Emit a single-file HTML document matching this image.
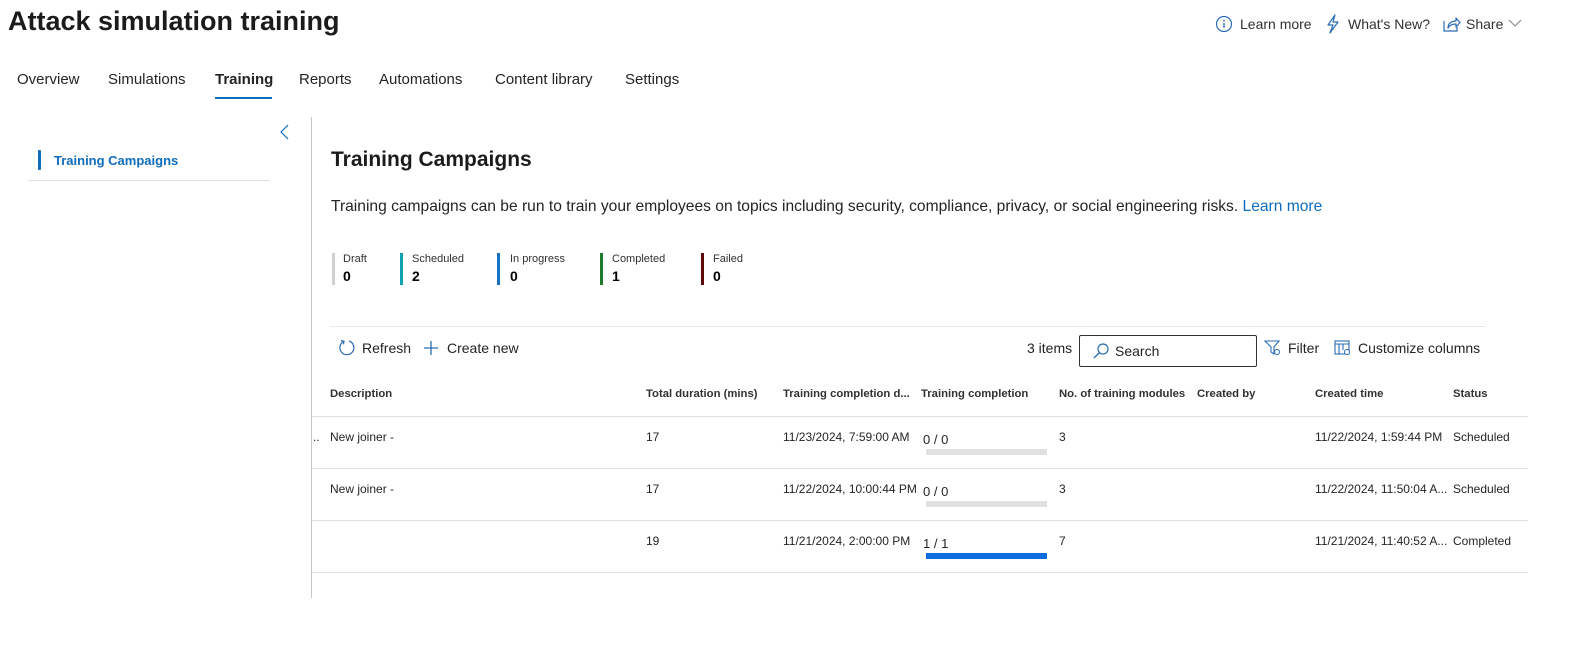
<!DOCTYPE html>
<html><head><meta charset="utf-8"><style>
*{margin:0;padding:0;box-sizing:border-box}
body{width:1591px;height:648px;background:#fff;font-family:"Liberation Sans",sans-serif;color:#242424;position:relative;overflow:hidden}
.a{position:absolute;white-space:nowrap}
.t12{font-size:12px}
.hd{font-size:11.3px;font-weight:bold;color:#323130}
.line{position:absolute;height:1px;background:#e1dfdd}
.bar{position:absolute;width:3px;height:32px}
.st{position:absolute;font-size:11px;color:#323130}
.st b{display:block;font-size:14px;color:#000;margin-top:3px}
</style></head><body>
<div class="a" style="left:8px;top:6px;font-size:27px;font-weight:bold;color:#1b1b1b">Attack simulation training</div>

<svg class="a" style="left:1215px;top:15px" width="18" height="18" viewBox="0 0 18 18"><circle cx="9" cy="9" r="7.5" fill="none" stroke="#2a6cb5" stroke-width="1.2"/><line x1="9" y1="8" x2="9" y2="13" stroke="#2a6cb5" stroke-width="1.3"/><circle cx="9" cy="5.5" r="0.9" fill="#2a6cb5"/></svg>
<div class="a" style="left:1240px;top:16px;font-size:14px;color:#323130">Learn more</div>
<svg class="a" style="left:1325px;top:14px" width="16" height="20" viewBox="0 0 16 20"><path d="M10 1 L3 11 H8 L5 19 L13 8 H8 Z" fill="none" stroke="#2a6cb5" stroke-width="1.2" stroke-linejoin="round"/></svg>
<div class="a" style="left:1348px;top:16px;font-size:14px;color:#323130">What's New?</div>
<svg class="a" style="left:1443px;top:15px" width="18" height="18" viewBox="0 0 18 18"><path d="M1 6 V16 H14 V12" fill="none" stroke="#2a6cb5" stroke-width="1.2"/><path d="M5 13 C5 8 9 6 13 6 V3 L17 7.5 L13 12 V9 C9 9 7 10 5 13Z" fill="none" stroke="#2a6cb5" stroke-width="1.2" stroke-linejoin="round"/></svg>
<div class="a" style="left:1466px;top:16px;font-size:14px;color:#323130">Share</div>
<svg class="a" style="left:1508px;top:18px" width="14" height="10" viewBox="0 0 14 10"><path d="M1 2 L7 8 L13 2" fill="none" stroke="#8a8886" stroke-width="1.1"/></svg>

<div class="a" style="left:17px;top:71px;font-size:15px">Overview</div>
<div class="a" style="left:108px;top:71px;font-size:15px">Simulations</div>
<div class="a" style="left:215px;top:71px;font-size:15px;font-weight:bold">Training</div>
<div class="a" style="left:215px;top:97px;width:57px;height:2px;background:#0f6cbd"></div>
<div class="a" style="left:299px;top:71px;font-size:15px">Reports</div>
<div class="a" style="left:379px;top:71px;font-size:15px">Automations</div>
<div class="a" style="left:495px;top:71px;font-size:15px">Content library</div>
<div class="a" style="left:625px;top:71px;font-size:15px">Settings</div>

<svg class="a" style="left:279px;top:124px" width="12" height="16" viewBox="0 0 12 16"><path d="M9 1 L2 8 L9 15" fill="none" stroke="#0f6cbd" stroke-width="1.2"/></svg>
<div class="a" style="left:311px;top:117px;width:1px;height:481px;background:#c8c6c4"></div>
<div class="a" style="left:38px;top:150px;width:3px;height:20px;background:#0f6cbd;border-radius:1px"></div>
<div class="a" style="left:54px;top:153px;font-size:13px;font-weight:bold;color:#0f6cbd">Training Campaigns</div>
<div class="line" style="left:28px;top:180px;width:241px"></div>

<div class="a" style="left:331px;top:148px;font-size:21px;font-weight:bold;color:#1b1b1b">Training Campaigns</div>
<div class="a" style="left:331px;top:198px;font-size:15.6px;color:#242424">Training campaigns can be run to train your employees on topics including security, compliance, privacy, or social engineering risks. <span style="color:#0f6cbd">Learn more</span></div>

<div class="bar" style="left:332px;top:253px;background:#d1d1d1"></div><div class="st" style="left:343px;top:253px">Draft<b>0</b></div>
<div class="bar" style="left:400px;top:253px;background:#0fa3b1"></div><div class="st" style="left:412px;top:253px">Scheduled<b>2</b></div>
<div class="bar" style="left:497px;top:253px;background:#1872c4"></div><div class="st" style="left:510px;top:253px">In progress<b>0</b></div>
<div class="bar" style="left:600px;top:253px;background:#1e7a2b"></div><div class="st" style="left:612px;top:253px">Completed<b>1</b></div>
<div class="bar" style="left:701px;top:253px;background:#5c0a0a"></div><div class="st" style="left:713px;top:253px">Failed<b>0</b></div>

<div class="line" style="left:330px;top:326px;width:1155px;background:#e8e8e8"></div>
<svg class="a" style="left:338px;top:339px" width="18" height="18" viewBox="0 0 18 18"><path d="M6 2.3 A7 7 0 1 0 11 2" fill="none" stroke="#2a6cb5" stroke-width="1.2"/><path d="M3 1.5 L6 2.3 L5.5 5.3" fill="none" stroke="#2a6cb5" stroke-width="1.2"/></svg>
<div class="a" style="left:362px;top:340px;font-size:14px">Refresh</div>
<svg class="a" style="left:423px;top:340px" width="16" height="16" viewBox="0 0 16 16"><path d="M8 1 V15 M1 8 H15" stroke="#2a6cb5" stroke-width="1.3"/></svg>
<div class="a" style="left:447px;top:340px;font-size:14px">Create new</div>
<div class="a" style="left:1027px;top:340px;font-size:14px">3 items</div>
<div class="a" style="left:1079px;top:335px;width:178px;height:32px;border:1px solid #323130;border-radius:2px"></div>
<svg class="a" style="left:1092px;top:342px" width="18" height="18" viewBox="0 0 18 18"><circle cx="11" cy="7" r="5" fill="none" stroke="#2a6cb5" stroke-width="1.2"/><path d="M7.5 10.5 L2 16" stroke="#2a6cb5" stroke-width="1.3"/></svg>
<div class="a" style="left:1115px;top:343px;font-size:14px">Search</div>
<svg class="a" style="left:1264px;top:339px" width="18" height="18" viewBox="0 0 18 18"><path d="M1 2 H15 L10 8 V15 L7 13 V8 Z" fill="none" stroke="#2a6cb5" stroke-width="1.1"/><circle cx="13" cy="13" r="2.5" fill="none" stroke="#2a6cb5" stroke-width="1"/></svg>
<div class="a" style="left:1288px;top:340px;font-size:14px">Filter</div>
<svg class="a" style="left:1334px;top:339px" width="18" height="18" viewBox="0 0 18 18"><rect x="1" y="2" width="14" height="13" fill="none" stroke="#2a6cb5" stroke-width="1.1"/><path d="M1 5 H15 M5 5 V15 M9 5 V11" stroke="#2a6cb5" stroke-width="1.1"/><circle cx="13" cy="13" r="2.5" fill="#fff" stroke="#2a6cb5" stroke-width="1"/></svg>
<div class="a" style="left:1358px;top:340px;font-size:14px">Customize columns</div>

<div class="a hd" style="left:330px;top:388px">Description</div>
<div class="a hd" style="left:646px;top:388px">Total duration (mins)</div>
<div class="a hd" style="left:783px;top:388px">Training completion d...</div>
<div class="a hd" style="left:921px;top:388px">Training completion</div>
<div class="a hd" style="left:1059px;top:388px">No. of training modules</div>
<div class="a hd" style="left:1197px;top:388px">Created by</div>
<div class="a hd" style="left:1315px;top:388px">Created time</div>
<div class="a hd" style="left:1453px;top:388px">Status</div>
<div class="line" style="left:312px;top:416px;width:1216px"></div>

<div class="a t12" style="left:313px;top:430px">..</div>
<div class="a t12" style="left:330px;top:430px">New joiner -</div>
<div class="a t12" style="left:646px;top:430px">17</div>
<div class="a t12" style="left:783px;top:430px">11/23/2024, 7:59:00 AM</div>
<div class="a" style="left:923px;top:432px;font-size:13px">0 / 0</div>
<div class="a" style="left:926px;top:449px;width:121px;height:6px;background:#e1e1e1"></div>
<div class="a t12" style="left:1059px;top:430px">3</div>
<div class="a t12" style="left:1315px;top:430px">11/22/2024, 1:59:44 PM</div>
<div class="a t12" style="left:1453px;top:430px">Scheduled</div>
<div class="line" style="left:312px;top:468px;width:1216px"></div>

<div class="a t12" style="left:330px;top:482px">New joiner -</div>
<div class="a t12" style="left:646px;top:482px">17</div>
<div class="a t12" style="left:783px;top:482px">11/22/2024, 10:00:44 PM</div>
<div class="a" style="left:923px;top:484px;font-size:13px">0 / 0</div>
<div class="a" style="left:926px;top:501px;width:121px;height:6px;background:#e1e1e1"></div>
<div class="a t12" style="left:1059px;top:482px">3</div>
<div class="a t12" style="left:1315px;top:482px">11/22/2024, 11:50:04 A...</div>
<div class="a t12" style="left:1453px;top:482px">Scheduled</div>
<div class="line" style="left:312px;top:520px;width:1216px"></div>

<div class="a t12" style="left:646px;top:534px">19</div>
<div class="a t12" style="left:783px;top:534px">11/21/2024, 2:00:00 PM</div>
<div class="a" style="left:923px;top:536px;font-size:13px">1 / 1</div>
<div class="a" style="left:926px;top:553px;width:121px;height:6px;background:#0f6cdd"></div>
<div class="a t12" style="left:1059px;top:534px">7</div>
<div class="a t12" style="left:1315px;top:534px">11/21/2024, 11:40:52 A...</div>
<div class="a t12" style="left:1453px;top:534px">Completed</div>
<div class="line" style="left:312px;top:572px;width:1216px"></div>
</body></html>
